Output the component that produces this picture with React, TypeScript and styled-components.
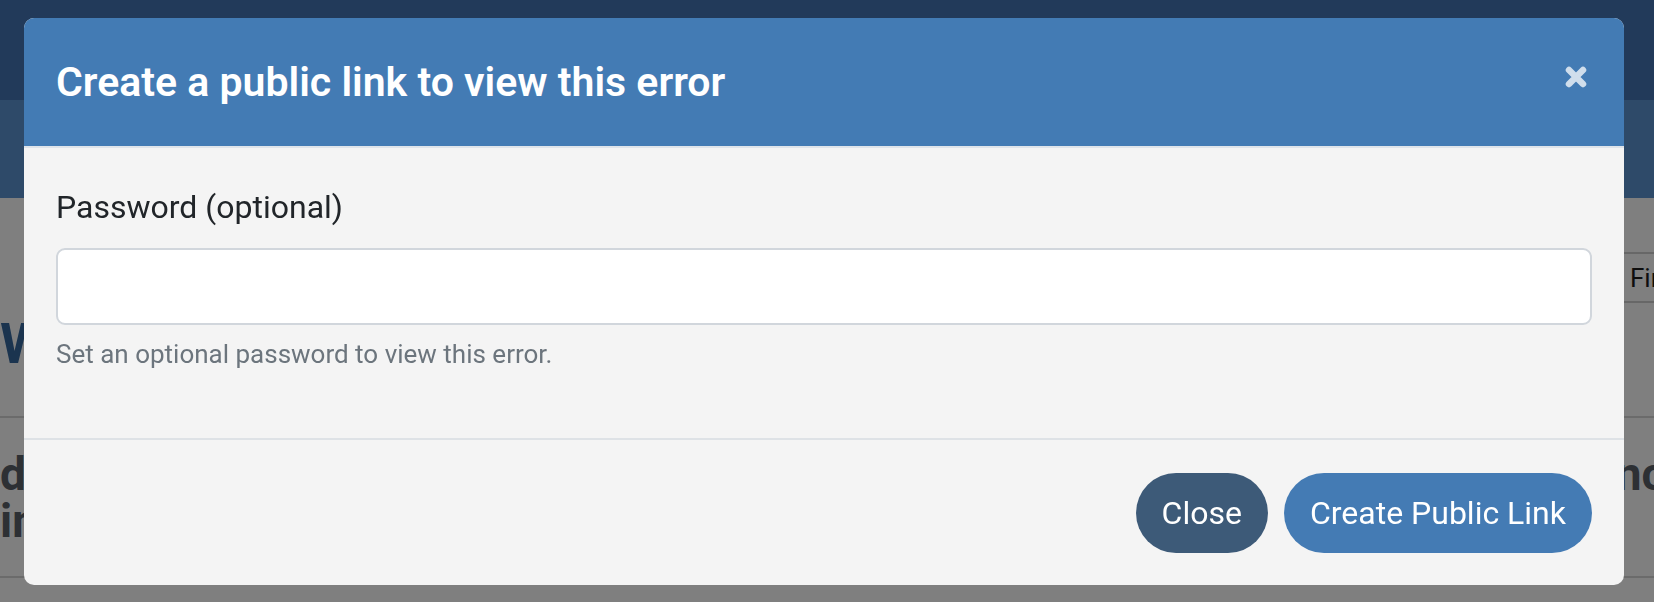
import React from "react";
import styled, { createGlobalStyle } from "styled-components";

const Global = createGlobalStyle`
  html, body { margin: 0; padding: 0; }
  body {
    font-family: Roboto, "Liberation Sans", sans-serif;
    overflow: hidden;
    background: #ffffff;
  }
  * { box-sizing: border-box; }
`;

const Page = styled.div`
  width: 100vw;
  height: 100vh;
  overflow: hidden;
  background: #ffffff;
`;

const NavBar = styled.div`
  height: 100px;
  background: #4474b4;
`;

const SubNav = styled.div`
  height: 98px;
  background: #5c94d2;
`;

const TitleRow = styled.div`
  display: flex;
  justify-content: space-between;
  align-items: flex-start;
  height: 220px;
  border-bottom: 2px solid #d6d6d6;
`;

const PageHeading = styled.h1`
  margin: 118px 0 0 0;
  font-size: 56px;
  line-height: 1;
  font-weight: 700;
  color: #36689f;
  white-space: nowrap;
`;

const FilterButton = styled.div`
  margin-top: 54px;
  margin-right: -140px;
  width: 176px;
  height: 51px;
  border: 2px solid #cfcfcf;
  border-radius: 4px;
  padding: 0 10px;
  display: flex;
  align-items: center;
  font-size: 26px;
  color: #1c1c1c;
  white-space: nowrap;
`;

const InfoRow = styled.div`
  display: flex;
  justify-content: space-between;
  align-items: flex-start;
  height: 160px;
  padding-top: 33px;
  border-bottom: 2px solid #d6d6d6;
`;

const InfoText = styled.div`
  font-size: 46px;
  line-height: 47px;
  font-weight: 700;
  color: #5a6068;
  white-space: nowrap;
`;

const InfoRight = styled(InfoText)`
  margin-right: -60px;
`;

const Backdrop = styled.div`
  position: fixed;
  inset: 0;
  background: rgba(0, 0, 0, 0.5);
`;

const ModalLayer = styled.div`
  position: fixed;
  inset: 0;
  padding: 18px 30px 0 24px;
`;

const Modal = styled.div`
  width: 1600px;
  background: #f4f4f4;
  border-radius: 10px;
  overflow: hidden;
  display: flex;
  flex-direction: column;
`;

const ModalHeader = styled.div`
  display: flex;
  justify-content: space-between;
  align-items: flex-start;
  background: #437bb4;
  padding: 34px 36px 34px 32px;
  border-bottom: 2px solid #dfe4ea;
`;

const ModalTitle = styled.h5`
  margin: 0;
  font-size: 41px;
  line-height: 60px;
  font-weight: 600;
  color: #ffffff;
`;

const CloseX = styled.button`
  margin-top: 13px;
  padding: 0;
  border: 0;
  background: transparent;
  width: 24px;
  height: 24px;
  display: flex;
  cursor: pointer;
  color: rgba(255, 255, 255, 0.75);
`;

const ModalBody = styled.div`
  padding: 35px 32px 64px 32px;
  border-bottom: 2px solid #dee2e6;
`;

const Label = styled.label`
  display: block;
  font-size: 32px;
  line-height: 48px;
  color: #212529;
  margin-bottom: 17px;
`;

const Input = styled.input`
  display: block;
  width: 100%;
  height: 77px;
  border: 2px solid #d1d6dc;
  border-radius: 9px;
  background: #ffffff;
  font-size: 32px;
  padding: 0 24px;
  outline: none;
`;

const HelpText = styled.small`
  display: block;
  margin-top: 10px;
  font-size: 26px;
  line-height: 39px;
  color: #6c757d;
`;

const ModalFooter = styled.div`
  display: flex;
  justify-content: flex-end;
  align-items: center;
  gap: 16px;
  padding: 33px 32px 32px 32px;
`;

const PillButton = styled.button<{ $variant: "dark" | "primary" }>`
  height: 80px;
  padding: 0 26px;
  border: 0;
  border-radius: 40px;
  font-family: inherit;
  font-size: 32px;
  color: #ffffff;
  cursor: pointer;
  background: ${(p) => (p.$variant === "dark" ? "#3d5a78" : "#447bb4")};
`;

export default function App() {
  return (
    <>
      <Global />
      <Page>
        <NavBar />
        <SubNav />
        <TitleRow>
          <PageHeading>WARNING</PageHeading>
          <FilterButton>First seen</FilterButton>
        </TitleRow>
        <InfoRow>
          <InfoText>
            details
            <br />
            info
          </InfoText>
          <InfoRight>Occurrences</InfoRight>
        </InfoRow>
      </Page>
      <Backdrop />
      <ModalLayer>
        <Modal role="dialog" aria-modal="true">
          <ModalHeader>
            <ModalTitle>Create a public link to view this error</ModalTitle>
            <CloseX aria-label="Close">
              <svg width="24" height="24" viewBox="0 0 24 24">
                <path
                  d="M5 5 L19 19 M19 5 L5 19"
                  stroke="currentColor"
                  strokeWidth="6.5"
                  strokeLinecap="round"
                  fill="none"
                />
              </svg>
            </CloseX>
          </ModalHeader>
          <ModalBody>
            <Label htmlFor="pw">Password (optional)</Label>
            <Input id="pw" type="password" />
            <HelpText>Set an optional password to view this error.</HelpText>
          </ModalBody>
          <ModalFooter>
            <PillButton $variant="dark">Close</PillButton>
            <PillButton $variant="primary">Create Public Link</PillButton>
          </ModalFooter>
        </Modal>
      </ModalLayer>
    </>
  );
}
